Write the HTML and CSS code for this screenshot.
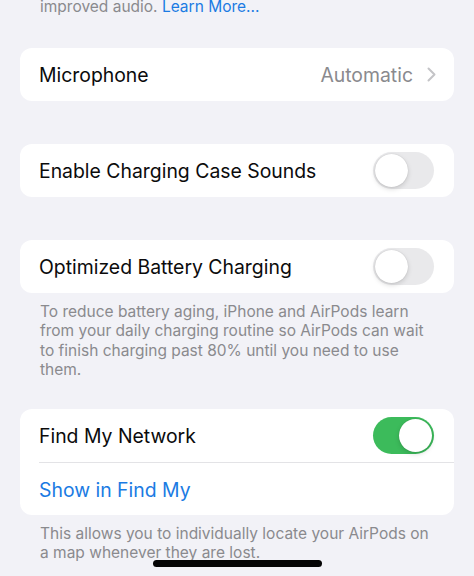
FILE: index.html
```html
<!DOCTYPE html>
<html lang="en">
<head>
    <meta charset="UTF-8">
    <meta name="viewport" content="width=device-width, initial-scale=1.0">
    <title>AirPods Settings</title>
    <link rel="stylesheet" href="styles.css">
</head>
<body>
    <div class="settings">
        <p class="note note-top">improved audio. <a href="#">Learn More...</a></p>

        <div class="group">
            <div class="row">
                <span class="label">Microphone</span>
                <span class="value">Automatic</span>
                <svg class="chevron" width="9" height="15" viewBox="0 0 9 15">
                    <path d="M1.5 1.5 L7.5 7.5 L1.5 13.5" fill="none" stroke="#c4c4c7" stroke-width="2" stroke-linecap="round" stroke-linejoin="round"/>
                </svg>
            </div>
        </div>

        <div class="group">
            <div class="row">
                <span class="label">Enable Charging Case Sounds</span>
                <span class="toggle"><span class="knob"></span></span>
            </div>
        </div>

        <div class="group">
            <div class="row">
                <span class="label">Optimized Battery Charging</span>
                <span class="toggle"><span class="knob"></span></span>
            </div>
        </div>
        <p class="note">To reduce battery aging, iPhone and AirPods learn from your daily charging routine so AirPods can wait to finish charging past 80% until you need to use them.</p>

        <div class="group">
            <div class="row">
                <span class="label">Find My Network</span>
                <span class="toggle on"><span class="knob"></span></span>
            </div>
            <div class="row">
                <a class="label link" href="#">Show in Find My</a>
            </div>
        </div>
        <p class="note">This allows you to individually locate your AirPods on a map whenever they are lost.</p>
    </div>

    <div class="home-indicator"></div>
</body>
</html>
```

FILE: styles.css
```css
body {
    font-family: Inter, "Noto Sans", sans-serif;
    background-color: #f2f2f7;
    margin: 0;
    height: 576px;
    overflow: hidden;
    position: relative;
}
.settings {
    padding: 0 20px;
    display: flex;
    flex-direction: column;
}
.note {
    margin: 0;
    padding: 9px 20px 0;
    font-size: 15.5px;
    line-height: 19.5px;
    color: #8a8a8e;
}
.note a {
    color: #1b7be3;
    text-decoration: none;
}
.note-top {
    margin-top: -3px;
    padding-top: 0;
    margin-bottom: 31px;
}
.group {
    background: #fff;
    border-radius: 12px;
    margin-bottom: 43px;
}
.group + .note {
    margin-top: -43px;
    margin-bottom: 29px;
}
.row {
    height: 53px;
    display: flex;
    align-items: center;
    padding: 2px 20px 0 19px;
    box-sizing: border-box;
    position: relative;
}
.row + .row {
    border-top: 1px solid #e3e3e6;
    margin-left: 19px;
    padding-left: 0;
}
.label {
    flex: 1;
    font-size: 19.4px;
    color: #0b0b0c;
}
.link {
    color: #1b7be3;
    text-decoration: none;
}
.value {
    font-size: 19.4px;
    color: #8a8a8e;
    margin-right: 14px;
}
.chevron {
    margin-right: -2px;
    margin-top: -2px;
}
.toggle {
    width: 61px;
    height: 37px;
    border-radius: 19px;
    background: #e9e9eb;
    display: flex;
    align-items: center;
    padding: 2px;
    box-sizing: border-box;
    margin-top: -2px;
}
.toggle .knob {
    width: 33px;
    height: 33px;
    border-radius: 50%;
    background: #fff;
    box-shadow: 0 2px 5px rgba(0,0,0,0.15), 0 0 1px rgba(0,0,0,0.2);
}
.toggle.on {
    background: #3cbb5b;
    justify-content: flex-end;
}
.home-indicator {
    position: absolute;
    left: 153px;
    top: 560px;
    width: 169px;
    height: 7px;
    border-radius: 4px;
    background: #050505;
}
```
